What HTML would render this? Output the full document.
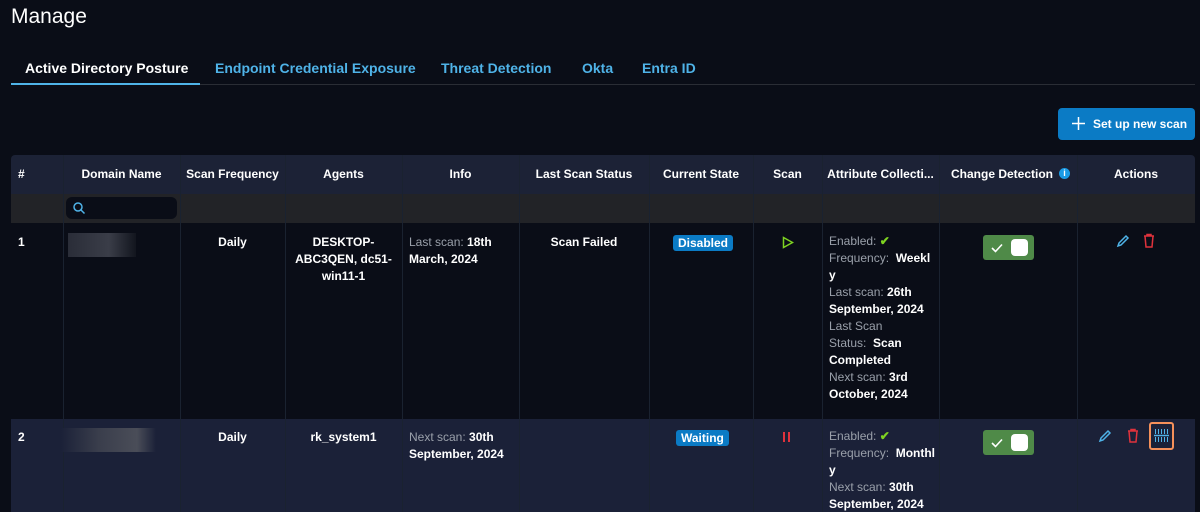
<!DOCTYPE html>
<html><head><meta charset="utf-8"><style>
*{margin:0;padding:0;box-sizing:border-box}
body{width:1200px;height:512px;overflow:hidden;background:#0a0d17;font-family:"Liberation Sans",sans-serif;color:#fff;position:relative}
.a{position:absolute}
h1{position:absolute;left:11px;top:5px;font-size:21px;font-weight:normal;color:#fff}
.tab{position:absolute;top:60px;font-size:14px;font-weight:bold;color:#4fb3e8;white-space:nowrap}
.tbl{position:absolute;left:11px;top:155px;width:1184px;height:357px;border-radius:4px 4px 0 0;overflow:hidden}
.hd{position:absolute;left:0;top:0;width:1184px;height:39px;background:#1c2236}
.fr{position:absolute;left:0;top:39px;width:1184px;height:29px;background:#222327}
.r1{position:absolute;left:0;top:68px;width:1184px;height:195px;background:#0a0d17}
.r2{position:absolute;left:0;top:264px;width:1184px;height:100px;background:#1b2138}
.vl{position:absolute;top:0;width:1px;height:357px;background:#1a2230}
.th{position:absolute;top:12px;font-size:12px;font-weight:bold;text-align:center;white-space:nowrap}
.c{position:absolute;font-size:12px;line-height:17px;font-weight:bold;color:#fff}
.g{color:#9aa0aa;font-weight:normal}
.badge{position:absolute;background:#0b7bc5;color:#fff;font-size:12px;font-weight:bold;padding:1px 5px;border-radius:3px}
.tog{position:absolute;width:51px;height:25px;background:#4f8a48;border-radius:3px}
.tog i{position:absolute;right:6px;top:4px;width:17px;height:17px;background:#fff;border-radius:4px}
</style></head><body>
<h1>Manage</h1>
<div class="tab" style="left:25px;color:#fff">Active Directory Posture</div>
<div class="tab" style="left:215px">Endpoint Credential Exposure</div>
<div class="tab" style="left:441px">Threat Detection</div>
<div class="tab" style="left:582px">Okta</div>
<div class="tab" style="left:642px">Entra ID</div>
<div class="a" style="left:11px;top:84px;width:1184px;height:1px;background:#2a2d35"></div>
<div class="a" style="left:11px;top:83px;width:189px;height:2px;background:#4fb3e8"></div>
<div class="a" style="left:1058px;top:108px;width:137px;height:32px;background:#0b7bc5;border-radius:4px;font-size:12px;font-weight:bold;line-height:32px;padding-left:35px">Set up new scan</div>
<div class="a" style="left:1072px;top:117px;width:13px;height:13px">
<svg width="13" height="13"><path d="M6.5 0V13M0 6.5H13" stroke="#fff" stroke-width="1.5"/></svg></div>
<div class="tbl">
<div class="hd"></div><div class="fr"></div><div class="r1"></div><div class="r2"></div>
<div class="vl" style="left:52px"></div><div class="vl" style="left:169px"></div><div class="vl" style="left:274px"></div><div class="vl" style="left:391px"></div><div class="vl" style="left:508px"></div><div class="vl" style="left:638px"></div><div class="vl" style="left:742px"></div><div class="vl" style="left:811px"></div><div class="vl" style="left:928px"></div><div class="vl" style="left:1066px"></div>
<div class="th" style="left:7px">#</div>
<div class="th" style="left:52px;width:117px">Domain Name</div>
<div class="th" style="left:169px;width:105px">Scan Frequency</div>
<div class="th" style="left:274px;width:117px">Agents</div>
<div class="th" style="left:391px;width:117px">Info</div>
<div class="th" style="left:508px;width:130px">Last Scan Status</div>
<div class="th" style="left:638px;width:104px">Current State</div>
<div class="th" style="left:742px;width:69px">Scan</div>
<div class="th" style="left:811px;width:117px">Attribute Collecti...</div>
<div class="th" style="left:940px;text-align:left">Change Detection</div>
<div class="a" style="left:1048px;top:13px;width:11px;height:11px;border-radius:50%;background:#1a9be6;font-size:9px;text-align:center;line-height:11px;font-weight:bold">i</div>
<div class="th" style="left:1066px;width:118px">Actions</div>
<div class="a" style="left:55px;top:42px;width:111px;height:22px;background:#0a0d17;border-radius:6px"></div>
<svg class="a" style="left:61px;top:46px" width="14" height="14"><circle cx="6" cy="6" r="4" stroke="#4fb3e8" stroke-width="1.5" fill="none"/><path d="M9 9L12.5 12.5" stroke="#4fb3e8" stroke-width="1.5"/></svg>
<!-- row1 -->
<div class="c" style="left:7px;top:79px">1</div>
<div class="a" style="left:57px;top:78px;width:68px;height:24px;background:linear-gradient(90deg,#2a2d38,#3a3d48 60%,#12151e)"></div>
<div class="c" style="left:169px;width:105px;top:79px;text-align:center">Daily</div>
<div class="c" style="left:274px;width:117px;top:79px;text-align:center">DESKTOP-<br>ABC3QEN, dc51-<br>win11-1</div>
<div class="c" style="left:398px;top:79px"><span class="g">Last scan:</span> 18th<br>March, 2024</div>
<div class="c" style="left:508px;width:130px;top:79px;text-align:center">Scan Failed</div>
<div class="badge" style="left:662px;top:80px">Disabled</div>
<svg class="a" style="left:771px;top:81px" width="12" height="13"><path d="M1.5 1.5L10.5 6.5L1.5 11.5Z" stroke="#7ed321" stroke-width="1.5" fill="none"/></svg>
<div class="c" style="left:818px;top:78px;width:108px"><span class="g">Enabled:</span> <span style="color:#7ed321">✔</span><br><span class="g">Frequency:</span>&nbsp; Weekl<br>y<br><span class="g">Last scan:</span> 26th<br>September, 2024<br><span class="g">Last Scan<br>Status:</span>&nbsp; Scan<br>Completed<br><span class="g">Next scan:</span> 3rd<br>October, 2024</div>
<div class="tog" style="left:972px;top:80px"><svg class="a" style="left:8px;top:8px" width="12" height="10"><path d="M1 5L4.5 8.5L11 1.5" stroke="#fff" stroke-width="1.6" fill="none"/></svg><i></i></div>
<svg class="a" style="left:1105px;top:79px" width="14" height="14"><path d="M2 12L3 9L10 2L12 4L5 11Z" stroke="#4fb3e8" stroke-width="1.5" fill="none"/></svg>
<svg class="a" style="left:1131px;top:78px" width="14" height="15"><path d="M2 3H12M5 3V1.5H9V3M3 3L4 14H10L11 3" stroke="#e0323c" stroke-width="1.5" fill="none"/></svg>
<!-- row2 -->
<div class="c" style="left:7px;top:274px">2</div>
<div class="a" style="left:50px;top:273px;width:95px;height:24px;background:linear-gradient(90deg,#1b2138,#3a3e4c 40%,#4a4d58 80%,#1b2138)"></div>
<div class="c" style="left:169px;width:105px;top:274px;text-align:center">Daily</div>
<div class="c" style="left:274px;width:117px;top:274px;text-align:center">rk_system1</div>
<div class="c" style="left:398px;top:274px"><span class="g">Next scan:</span> 30th<br>September, 2024</div>
<div class="badge" style="left:665px;top:275px">Waiting</div>
<div class="a" style="left:772px;top:277px;width:2px;height:10px;background:#e0323c"></div>
<div class="a" style="left:777px;top:277px;width:2px;height:10px;background:#e0323c"></div>
<div class="c" style="left:818px;top:273px;width:108px"><span class="g">Enabled:</span> <span style="color:#7ed321">✔</span><br><span class="g">Frequency:</span>&nbsp; Monthl<br>y<br><span class="g">Next scan:</span> 30th<br>September, 2024</div>
<div class="tog" style="left:972px;top:275px"><svg class="a" style="left:8px;top:8px" width="12" height="10"><path d="M1 5L4.5 8.5L11 1.5" stroke="#fff" stroke-width="1.6" fill="none"/></svg><i></i></div>
<svg class="a" style="left:1087px;top:274px" width="14" height="14"><path d="M2 12L3 9L10 2L12 4L5 11Z" stroke="#4fb3e8" stroke-width="1.5" fill="none"/></svg>
<svg class="a" style="left:1115px;top:273px" width="14" height="15"><path d="M2 3H12M5 3V1.5H9V3M3 3L4 14H10L11 3" stroke="#e0323c" stroke-width="1.5" fill="none"/></svg>
<div class="a" style="left:1138px;top:267px;width:25px;height:28px;border:2px solid #f5905a;border-radius:3px"></div>
<svg class="a" style="left:1142px;top:272px" width="17" height="17"><path d="M2.5 2V7M5.5 2V7M8.5 2V7M11.5 2V7M14.5 2V7M2.5 10V15M5.5 10V15M8.5 10V15M11.5 10V15M14.5 10V15" stroke="#4fb3e8" stroke-width="1"/><path d="M1 8.5H16" stroke="#4fb3e8" stroke-width="1.4"/></svg>
</div>
</body></html>
